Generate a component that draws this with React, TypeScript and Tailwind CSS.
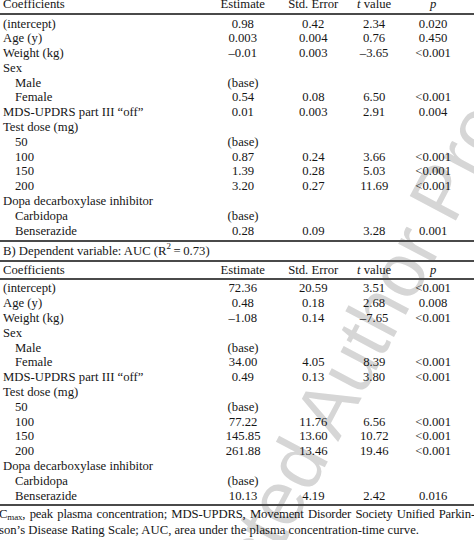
type Row = {
  label: string;
  sub?: boolean;
  est?: string;
  se?: string;
  t?: string;
  p?: string;
};

const tableA: Row[] = [
  { label: "(intercept)", est: "0.98", se: "0.42", t: "2.34", p: "0.020" },
  { label: "Age (y)", est: "0.003", se: "0.004", t: "0.76", p: "0.450" },
  { label: "Weight (kg)", est: "–0.01", se: "0.003", t: "–3.65", p: "<0.001" },
  { label: "Sex" },
  { label: "Male", sub: true, est: "(base)" },
  { label: "Female", sub: true, est: "0.54", se: "0.08", t: "6.50", p: "<0.001" },
  { label: "MDS-UPDRS part III “off”", est: "0.01", se: "0.003", t: "2.91", p: "0.004" },
  { label: "Test dose (mg)" },
  { label: "50", sub: true, est: "(base)" },
  { label: "100", sub: true, est: "0.87", se: "0.24", t: "3.66", p: "<0.001" },
  { label: "150", sub: true, est: "1.39", se: "0.28", t: "5.03", p: "<0.001" },
  { label: "200", sub: true, est: "3.20", se: "0.27", t: "11.69", p: "<0.001" },
  { label: "Dopa decarboxylase inhibitor" },
  { label: "Carbidopa", sub: true, est: "(base)" },
  { label: "Benserazide", sub: true, est: "0.28", se: "0.09", t: "3.28", p: "0.001" },
];

const tableB: Row[] = [
  { label: "(intercept)", est: "72.36", se: "20.59", t: "3.51", p: "<0.001" },
  { label: "Age (y)", est: "0.48", se: "0.18", t: "2.68", p: "0.008" },
  { label: "Weight (kg)", est: "–1.08", se: "0.14", t: "–7.65", p: "<0.001" },
  { label: "Sex" },
  { label: "Male", sub: true, est: "(base)" },
  { label: "Female", sub: true, est: "34.00", se: "4.05", t: "8.39", p: "<0.001" },
  { label: "MDS-UPDRS part III “off”", est: "0.49", se: "0.13", t: "3.80", p: "<0.001" },
  { label: "Test dose (mg)" },
  { label: "50", sub: true, est: "(base)" },
  { label: "100", sub: true, est: "77.22", se: "11.76", t: "6.56", p: "<0.001" },
  { label: "150", sub: true, est: "145.85", se: "13.60", t: "10.72", p: "<0.001" },
  { label: "200", sub: true, est: "261.88", se: "13.46", t: "19.46", p: "<0.001" },
  { label: "Dopa decarboxylase inhibitor" },
  { label: "Carbidopa", sub: true, est: "(base)" },
  { label: "Benserazide", sub: true, est: "10.13", se: "4.19", t: "2.42", p: "0.016" },
];

function Rule() {
  return <div className="h-[2px] w-full bg-[#4a4a4a]" />;
}

function HeaderRow({ className = "" }: { className?: string }) {
  return (
    <div className={`flex h-[16px] items-center whitespace-nowrap ${className}`}>
      <div className="w-[226px] pl-[3px]">Coefficients</div>
      <div className="w-[58px] text-center">Estimate</div>
      <div className="w-[90px] text-center">Std. Error</div>
      <div className="w-[38px] text-center">
        <i>t</i> value
      </div>
      <div className="w-[86px] text-center">
        <i>p</i>
      </div>
    </div>
  );
}

function DataRows({ rows }: { rows: Row[] }) {
  return (
    <div>
      {rows.map((r, i) => (
        <div key={i} className="flex h-[14.8px] items-center whitespace-nowrap">
          <div className={`w-[226px] ${r.sub ? "pl-[15px]" : "pl-[3px]"}`}>{r.label}</div>
          <div className="w-[58px] text-center">{r.est}</div>
          <div className="w-[90px] text-center">{r.se}</div>
          <div className="w-[38px] text-center">{r.t}</div>
          <div className="w-[86px] text-center">{r.p}</div>
        </div>
      ))}
    </div>
  );
}

export default function App() {
  return (
    <div className="relative w-[474px] h-[540px] overflow-hidden bg-white font-['Liberation_Serif',serif] text-[12.7px] leading-[14.8px] text-[#161616]">
      {/* watermark sits behind the table */}
      <div className="absolute left-[314px] top-[432px] -translate-x-1/2 -translate-y-1/2 -rotate-[62deg] whitespace-nowrap font-['Liberation_Sans',sans-serif] text-[76px] leading-none text-[#d6d6d6] select-none">
        Uncorrected Author Proof
      </div>

      <div className="relative flex flex-col">
        <HeaderRow className="-mt-[4px]" />
        <div className="mt-[1px]">
          <Rule />
        </div>
        <div className="pt-[1.5px]">
          <DataRows rows={tableA} />
        </div>
        <div className="mt-[1.5px]">
          <Rule />
        </div>
        <div className="flex h-[18px] items-center pl-[3px]">
          B) Dependent variable: AUC (R<sup className="text-[9px]">2</sup>&thinsp;=&thinsp;0.73)
        </div>
        <Rule />
        <HeaderRow />
        <Rule />
        <div className="pt-[1.5px]">
          <DataRows rows={tableB} />
        </div>
        <div className="mt-[0.5px]">
          <Rule />
        </div>
        <div className="leading-[16px] -ml-[1px] w-[476px]">
          <div className="tracking-[-0.15px] [text-align-last:justify]">
            C<sub className="text-[9px]">max</sub>, peak plasma concentration; MDS-UPDRS, Movement Disorder Society Unified Parkin-
          </div>
          <div>son’s Disease Rating Scale; AUC, area under the plasma concentration-time curve.</div>
        </div>
      </div>
    </div>
  );
}
